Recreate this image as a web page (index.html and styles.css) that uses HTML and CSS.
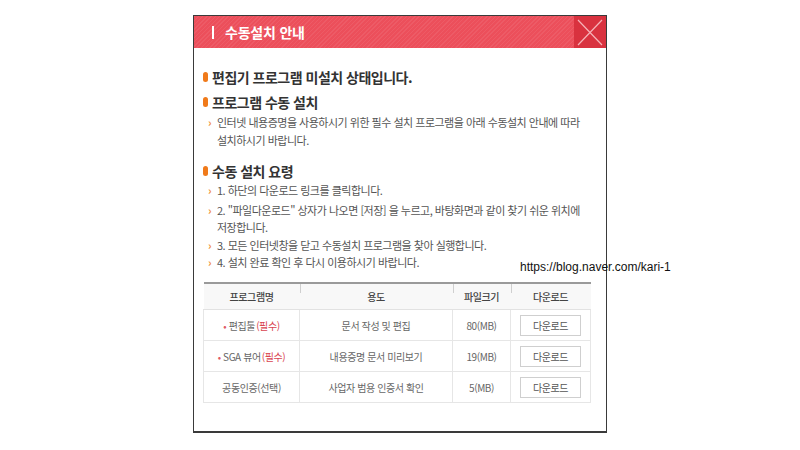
FILE: index.html
```html
<!DOCTYPE html>
<html lang="ko">
<head>
<meta charset="utf-8">
<link rel="stylesheet" href="styles.css">
</head>
<body>
<div class="page">
  <div class="dialog">
    <div class="dlg-head">
      <span class="dlg-bar"></span>
      <span class="dlg-title">수동설치 안내</span>
      <span class="dlg-close">
        <svg width="32" height="31" viewBox="0 0 32 31"><path d="M4 3 L28 28 M28 3 L4 28" stroke="#f6b3b8" stroke-width="1.2" fill="none"/></svg>
      </span>
    </div>
    <div class="dlg-body">
      <h2 class="tit tit-main">편집기 프로그램 미설치 상태입니다.</h2>
      <h3 class="tit">프로그램 수동 설치</h3>
      <ul class="list">
        <li>인터넷 내용증명을 사용하시기 위한 필수 설치 프로그램을 아래 수동설치 안내에 따라 설치하시기 바랍니다.</li>
      </ul>
      <h3 class="tit tit-gap">수동 설치 요령</h3>
      <ul class="list steps">
        <li>1. 하단의 다운로드 링크를 클릭합니다.</li>
        <li>2. "파일다운로드" 상자가 나오면 [저장] 을 누르고, 바탕화면과 같이 찾기 쉬운 위치에 저장합니다.</li>
        <li>3. 모든 인터넷창을 닫고 수동설치 프로그램을 찾아 실행합니다.</li>
        <li>4. 설치 완료 확인 후 다시 이용하시기 바랍니다.</li>
      </ul>
      <table class="tbl">
        <colgroup>
          <col class="c1"><col class="c2"><col class="c3"><col class="c4">
        </colgroup>
        <thead>
          <tr><th>프로그램명</th><th>용도</th><th>파일크기</th><th>다운로드</th></tr>
        </thead>
        <tbody>
          <tr><td><span class="dot">•</span> 편집툴<span class="req">(필수)</span></td><td>문서 작성 및 편집</td><td>80(MB)</td><td><span class="btn">다운로드</span></td></tr>
          <tr><td><span class="dot">•</span> SGA 뷰어<span class="req">(필수)</span></td><td>내용증명 문서 미리보기</td><td>19(MB)</td><td><span class="btn">다운로드</span></td></tr>
          <tr><td>공동인증(선택)</td><td>사업자 범용 인증서 확인</td><td>5(MB)</td><td><span class="btn">다운로드</span></td></tr>
        </tbody>
      </table>
    </div>
  </div>
  <div class="watermark">https://blog.naver.com/kari-1</div>
</div>
</body>
</html>
```

FILE: styles.css
```css
* { box-sizing: border-box; }
html, body { margin: 0; padding: 0; background: #fff; }
body { font-family: "Noto Sans CJK KR", "Noto Sans", sans-serif; }
.page {
  position: relative;
  width: 800px;
  height: 450px;
  display: flex;
  justify-content: center;
  align-items: flex-start;
  padding-top: 15px;
}
.dialog {
  width: 414px;
  height: 418px;
  border: 1px solid #3a3a3a;
  border-bottom-width: 2px;
  background: #fff;
  display: flex;
  flex-direction: column;
}
.dlg-head {
  height: 32px;
  display: flex;
  align-items: center;
  background-color: #ec4f5b;
  background-image: repeating-linear-gradient(135deg, rgba(255,255,255,0.07) 0 1px, rgba(0,0,0,0) 1px 3px);
}
.dlg-bar {
  width: 2px;
  height: 13px;
  background: #fff;
  margin-left: 18px;
  margin-right: 11px;
}
.dlg-title {
  color: #fff;
  font-weight: 700;
  font-size: 14px;
  letter-spacing: -0.2px;
  flex: 1;
}
.dlg-close {
  width: 32px;
  height: 32px;
  background: #d9323f;
  display: flex;
  align-items: center;
  justify-content: center;
}
.dlg-close svg { display: block; }
.dlg-body {
  padding: 18px 15px 0 9px;
  color: #555;
}
.tit {
  margin: 0;
  font-size: 14px;
  line-height: 22px;
  font-weight: 700;
  color: #333;
  letter-spacing: -0.5px;
  display: flex;
  align-items: center;
}
.tit::before {
  content: "";
  width: 5px;
  height: 10px;
  border-radius: 3px;
  background: #f07a1a;
  margin-right: 4px;
  flex: none;
}
.tit-main { margin-bottom: 3px; }
.tit-gap { margin-top: 11px; }
.list {
  list-style: none;
  margin: 0;
  padding: 0 0 0 5px;
  font-size: 11px;
  line-height: 18px;
  color: #555;
  letter-spacing: -0.5px;
}
.steps { line-height: 17.5px; }
.list li {
  position: relative;
  padding-left: 9px;
}
.list li::before {
  content: "›";
  position: absolute;
  left: 0;
  top: 0;
  color: #f0913a;
  font-weight: 700;
}
.steps li:first-child { margin-bottom: 2px; }
.tbl {
  margin-top: 10px;
  width: 387px;
  border-collapse: collapse;
  table-layout: fixed;
  font-size: 10px;
  color: #666;
  letter-spacing: -0.4px;
  text-align: center;
}
.c1 { width: 96px; }
.c2 { width: 153px; }
.c3 { width: 58px; }
.c4 { width: 80px; }
.tbl thead th {
  height: 27px;
  border-top: 2px solid #9a9a9a;
  border-bottom: 1px solid #e2e2e2;
  background: #f8f8f8;
  font-weight: 500;
  color: #444;
  position: relative;
  padding: 0;
}
.tbl thead th + th::before {
  content: "";
  position: absolute;
  left: 0;
  top: 0;
  width: 1px;
  height: 9px;
  background: #cfcfcf;
}
.tbl tbody td {
  height: 31px;
  border: 1px solid #e6e6e6;
  padding: 0;
}
.dot { color: #e05a64; }
.req { color: #d9434f; margin-left: 1px; }
.btn {
  display: inline-block;
  width: 61px;
  height: 21px;
  line-height: 19px;
  border: 1px solid #cfcfcf;
  background: #fff;
  color: #555;
}
.watermark {
  position: absolute;
  left: 520px;
  top: 260px;
  font-family: "Liberation Sans", Arial, sans-serif;
  font-size: 12px;
  color: #111;
}
```
